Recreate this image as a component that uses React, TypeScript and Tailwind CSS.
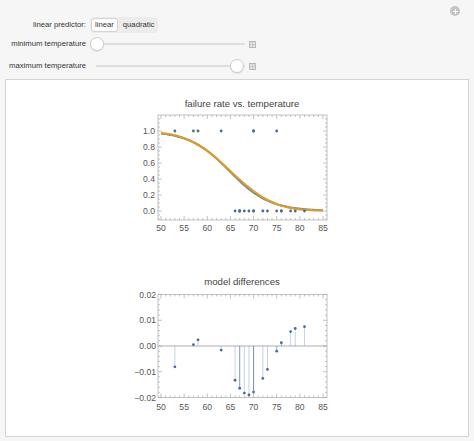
import React from "react";

const X = (t: number) => 161 + ((t - 50) * 162) / 35;
const Y1 = (p: number) => 211 - p * 80;
const Y2 = (v: number) => 346 - v * 2575;

const fails = [53, 57, 58, 63, 70, 70, 75];
const oks = [66, 67, 67, 67, 68, 69, 70, 70, 72, 73, 75, 76, 76, 78, 79, 81];

const diffs: [number, number][] = [
  [53, -0.0081], [57, 0.0005], [58, 0.0024], [63, -0.0016], [66, -0.0133],
  [67, -0.0164], [68, -0.0183], [69, -0.019], [70, -0.0179], [72, -0.0126],
  [73, -0.0091], [75, -0.002], [76, 0.0013], [78, 0.0056], [79, 0.0068], [81, 0.0075],
];
const counts: Record<number, number> = { 53: 1, 57: 1, 58: 1, 63: 1, 66: 1, 67: 3, 68: 1, 69: 1, 70: 4, 72: 1, 73: 1, 75: 2, 76: 2, 78: 1, 79: 1, 81: 1 };

const lin = (t: number) => 1 / (1 + Math.exp(-(15.0429 - 0.2322 * t)));
const dpts: [number, number][] = [[50, -0.004], ...diffs, [85, 0.003]];
const dAt = (t: number) => {
  for (let i = 0; i < dpts.length - 1; i++) {
    const [a, va] = dpts[i];
    const [b, vb] = dpts[i + 1];
    if (t >= a && t <= b) return va + ((vb - va) * (t - a)) / (b - a);
  }
  return 0;
};

const curve = (f: (t: number) => number) => {
  const pts: string[] = [];
  for (let t = 50; t <= 85.001; t += 0.25) pts.push(`${X(t).toFixed(2)},${Y1(f(t)).toFixed(2)}`);
  return "M" + pts.join(" L");
};

const FRAME = "#a8a8a8";
const LABEL = "#555";

function Frame({ l, r, t, b, xs, ys }: { l: number; r: number; t: number; b: number; xs: { v: number; major: boolean }[]; ys: { y: number; major: boolean }[] }) {
  return (
    <g stroke={FRAME} strokeWidth={0.7} fill="none">
      <rect x={l} y={t} width={r - l} height={b - t} />
      {xs.map((k, i) => {
        const len = k.major ? 4 : 2;
        return (
          <g key={i}>
            <line x1={k.v} x2={k.v} y1={b} y2={b - len} />
            <line x1={k.v} x2={k.v} y1={t} y2={t + len} />
          </g>
        );
      })}
      {ys.map((k, i) => {
        const len = k.major ? 4 : 2;
        return (
          <g key={i}>
            <line x1={l} x2={l + len} y1={k.y} y2={k.y} />
            <line x1={r} x2={r - len} y1={k.y} y2={k.y} />
          </g>
        );
      })}
    </g>
  );
}

const xTicks = () => {
  const arr: { v: number; major: boolean }[] = [];
  for (let t = 50; t <= 85; t++) arr.push({ v: X(t), major: t % 5 === 0 });
  return arr;
};

function Chart1() {
  const ys: { y: number; major: boolean }[] = [];
  for (let i = -2; i <= 23; i++) {
    const v = i * 0.05;
    const y = Y1(v);
    if (y > 115 && y < 220) ys.push({ y, major: i % 4 === 0 && i >= 0 && i <= 20 });
  }
  return (
    <svg width={462} height={175} viewBox="6 80 462 175" className="block">
      <text x={242} y={106.5} textAnchor="middle" fontSize={9.6} fill="#444">failure rate vs. temperature</text>
      <Frame l={158} r={327} t={115} b={220} xs={xTicks()} ys={ys} />
      {[0, 0.2, 0.4, 0.6, 0.8, 1.0].map((v) => (
        <text key={v} x={155} y={Y1(v) + 3} textAnchor="end" fontSize={8.6} fill={LABEL}>{v.toFixed(1)}</text>
      ))}
      {[50, 55, 60, 65, 70, 75, 80, 85].map((t) => (
        <text key={t} x={X(t)} y={231} textAnchor="middle" fontSize={8.6} fill={LABEL}>{t}</text>
      ))}
      <path d={curve(lin)} stroke="#5e81b5" strokeWidth={2} fill="none" />
      <path d={curve((t) => lin(t) - dAt(t))} stroke="#dc9d26" strokeWidth={2.2} fill="none" />
      {fails.map((t, i) => (
        <circle key={"f" + i} cx={X(t)} cy={Y1(1)} r={1.4} fill="#4b6a9c" />
      ))}
      {oks.map((t, i) => (
        <circle key={"o" + i} cx={X(t)} cy={Y1(0)} r={1.4} fill="#4b6a9c" />
      ))}
    </svg>
  );
}

function Chart2() {
  const ys: { y: number; major: boolean }[] = [];
  for (let i = -10; i <= 10; i++) {
    ys.push({ y: Y2(i * 0.002), major: i % 5 === 0 });
  }
  const labels = [
    [0.02, "0.02"], [0.01, "0.01"], [0, "0.00"], [-0.01, "\u22120.01"], [-0.02, "\u22120.02"],
  ] as [number, string][];
  return (
    <svg width={462} height={181} viewBox="6 255 462 181" className="block">
      <text x={242} y={284.5} textAnchor="middle" fontSize={9.6} fill="#444">model differences</text>
      <line x1={158} x2={327} y1={Y2(0)} y2={Y2(0)} stroke="#c9c9c9" strokeWidth={1.6} />
      {diffs.map(([t, v]) => {
        const n = counts[t];
        return Array.from({ length: n }).map((_, j) => (
          <line key={t + "-" + j} x1={X(t)} x2={X(t)} y1={Y2(0)} y2={Y2(v)} stroke="#5e81b5" strokeOpacity={0.4} strokeWidth={0.9} />
        ));
      })}
      <Frame l={158} r={327} t={Y2(0.02)} b={Y2(-0.02)} xs={xTicks()} ys={ys} />
      {labels.map(([v, s]) => (
        <text key={s} x={156} y={Y2(v) + 3} textAnchor="end" fontSize={8.6} fill={LABEL}>{s}</text>
      ))}
      {[50, 55, 60, 65, 70, 75, 80, 85].map((t) => (
        <text key={t} x={X(t)} y={409.5} textAnchor="middle" fontSize={8.6} fill={LABEL}>{t}</text>
      ))}
      {diffs.map(([t, v]) => (
        <circle key={"p" + t} cx={X(t)} cy={Y2(v)} r={1.4} fill="#4b6a9c" />
      ))}
    </svg>
  );
}

function PlusBox() {
  return (
    <svg width={7} height={7} viewBox="0 0 7 7" className="block">
      <rect x={0.5} y={0.5} width={6} height={6} fill="#e4e4e4" stroke="#b8b8b8" strokeWidth={1} />
      <line x1={3.5} x2={3.5} y1={1} y2={6} stroke="#c8c8c8" />
      <line x1={1} x2={6} y1={3.5} y2={3.5} stroke="#c8c8c8" />
    </svg>
  );
}

function Slider({ pos }: { pos: number }) {
  return (
    <div className="relative w-[155px] h-[14px]">
      <div className="absolute left-[6px] right-0 top-[6px] h-[2px] bg-[#dedede] rounded-full" />
      <div
        className="absolute top-0 w-[14px] h-[14px] rounded-full bg-white border border-[#d0d0d0] shadow-[0_0.5px_1px_rgba(0,0,0,0.15)]"
        style={{ left: pos }}
      />
    </div>
  );
}

export default function App() {
  return (
    <div className="relative w-[474px] h-[441px] bg-[#f6f6f6] overflow-hidden font-['Liberation_Sans',Arial,sans-serif] text-[#333]">
      <div className="absolute top-[6px] right-[14px] w-[10px] h-[10px] rounded-full bg-[#c4c4c4] flex items-center justify-center">
        <div className="relative w-[5px] h-[5px]">
          <div className="absolute left-[2px] top-0 w-[1px] h-[5px] bg-white" />
          <div className="absolute top-[2px] left-0 h-[1px] w-[5px] bg-white" />
        </div>
      </div>

      <div className="pt-[17px] flex flex-col text-[7.7px] leading-none">
        <div className="flex items-center h-[16px] gap-[4px]">
          <div className="w-[86px] text-right">linear predictor:</div>
          <div className="flex items-center h-[16px] w-[68px] rounded-[4px] bg-[#ececec] px-[1px] gap-[5px]">
            <div className="h-[14px] px-[3px] flex items-center rounded-[3px] bg-white border border-[#d2d2d2]">linear</div>
            <div className="flex items-center">quadratic</div>
          </div>
        </div>
        <div className="flex items-center h-[14px] mt-[4px] gap-[4px]">
          <div className="w-[86px] text-right">minimum temperature</div>
          <Slider pos={0} />
          <PlusBox />
        </div>
        <div className="flex items-center h-[14px] mt-[8px] gap-[4px]">
          <div className="w-[86px] text-right">maximum temperature</div>
          <Slider pos={140} />
          <PlusBox />
        </div>
      </div>

      <div className="mt-[6px] ml-[5px] w-[464px] h-[358px] bg-white border border-[#d4d4d4] flex flex-col">
        <Chart1 />
        <Chart2 />
      </div>
    </div>
  );
}
